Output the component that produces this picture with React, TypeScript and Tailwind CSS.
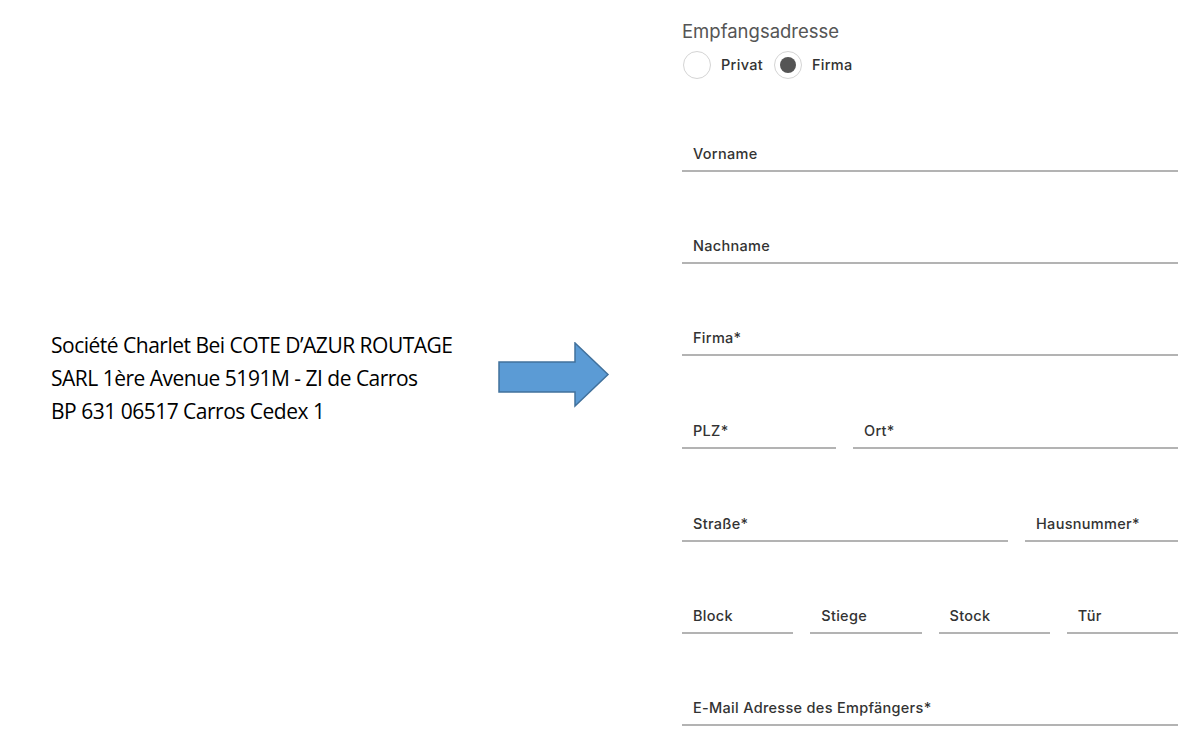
import React, { useState } from 'react';

type Field = { label: string; width?: string };

// each row: its fields plus the space above its label
const rows: { gap: string; fields: Field[] }[] = [
  { gap: 'mt-0', fields: [{ label: 'Vorname' }] },
  { gap: 'mt-[64px]', fields: [{ label: 'Nachname' }] },
  { gap: 'mt-[64px]', fields: [{ label: 'Firma*' }] },
  { gap: 'mt-[65px]', fields: [{ label: 'PLZ*', width: 'w-[154px]' }, { label: 'Ort*' }] },
  { gap: 'mt-[65px]', fields: [{ label: 'Straße*' }, { label: 'Hausnummer*', width: 'w-[153px]' }] },
  { gap: 'mt-[64px]', fields: [{ label: 'Block' }, { label: 'Stiege' }, { label: 'Stock' }, { label: 'Tür' }] },
  { gap: 'mt-[64px]', fields: [{ label: 'E-Mail Adresse des Empfängers*' }] },
];

const Radio = ({ checked, label, onClick }: { checked: boolean; label: string; onClick: () => void }) => (
  <button type="button" onClick={onClick} className="flex items-center gap-[10px]">
    <span className="w-[28px] h-[28px] rounded-full border border-[#d4d4d4] flex items-center justify-center bg-white">
      {checked && <span className="w-[16px] h-[16px] rounded-full bg-[#555555]" />}
    </span>
    <span className="text-[14.5px] font-medium text-[#333] tracking-[0.3px]">{label}</span>
  </button>
);

const App: React.FC = () => {
  const [type, setType] = useState<'privat' | 'firma'>('firma');

  return (
    <div className="w-[1200px] h-[745px] bg-white flex overflow-hidden">
      {/* sender address + arrow */}
      <div className="w-[682px] flex items-center pl-[51px] pt-[12px]">
        <div className="w-[447px] text-[21px] leading-[33px] text-black font-['Open_Sans',sans-serif] tracking-[-0.5px]">
          <p>Société Charlet Bei COTE D’AZUR ROUTAGE</p>
          <p>SARL 1ère Avenue 5191M - ZI de Carros</p>
          <p>BP 631 06517 Carros Cedex 1</p>
        </div>
        <svg width="112" height="66" viewBox="0 0 112 66" className="-mt-[8px]">
          <path d="M1 20H77V1L110 32.5L77 64V50H1Z" fill="#5b9bd5" stroke="#41719c" strokeWidth="1.5" />
        </svg>
      </div>

      {/* recipient form */}
      <div className="w-[496px] pt-[19px] font-['Inter',sans-serif]">
        <h2 className="text-[18.5px] leading-[24px] text-[#555]">Empfangsadresse</h2>
        <div className="flex items-center gap-[11px] mt-[8px] ml-[1px]">
          <Radio checked={type === 'privat'} label="Privat" onClick={() => setType('privat')} />
          <Radio checked={type === 'firma'} label="Firma" onClick={() => setType('firma')} />
        </div>
        <div className="mt-[65px] flex flex-col">
          {rows.map((row, i) => (
            <div key={i} className={`flex gap-[17px] ${row.gap}`}>
              {row.fields.map((f) => (
                <label
                  key={f.label}
                  className={`${f.width ?? 'flex-1'} border-b-2 border-[#b3b3b3] px-[11px] pb-[6px]`}
                >
                  <span className="block text-[14.5px] leading-[20px] font-medium text-[#333] tracking-[0.3px]">
                    {f.label}
                  </span>
                </label>
              ))}
            </div>
          ))}
        </div>
      </div>
    </div>
  );
};

export default App;
